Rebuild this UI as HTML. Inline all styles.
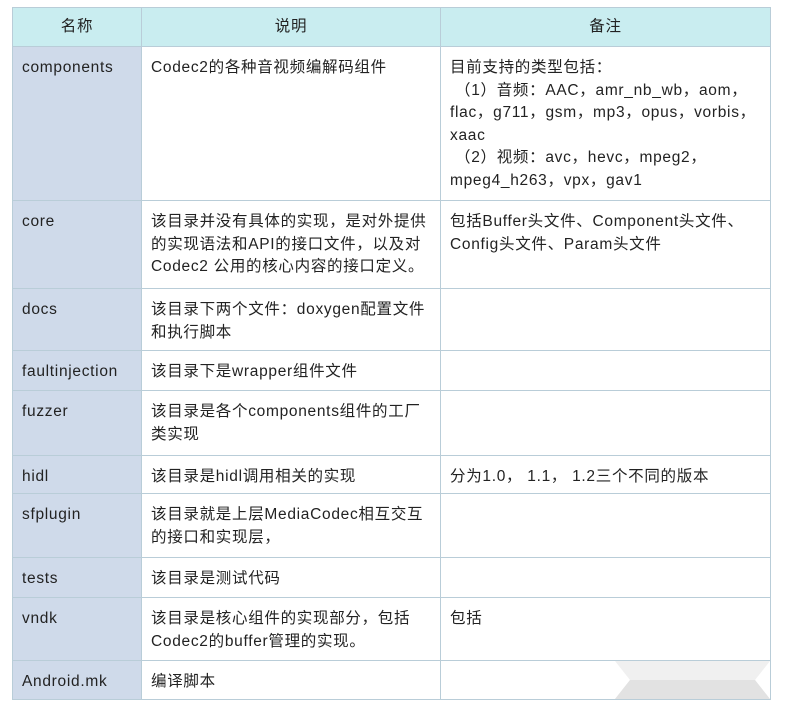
<!DOCTYPE html>
<html><head><meta charset="utf-8"><style>
body{margin:0;width:788px;height:713px;background:#fff;position:relative;overflow:hidden;font-family:"Liberation Sans","Noto Sans CJK SC",sans-serif;font-size:15.5px;color:#222;letter-spacing:0.7px;}
.c{position:absolute;box-sizing:border-box;border:1px solid #b9cdd8;padding:10px 0 0 9px;line-height:22.5px;white-space:nowrap;}
.h{background:#c9edf0;text-align:center;padding:8px 0 0 0;}
.n{background:#cfdaea;}
</style></head><body>
<div class="c h" style="left:12px;top:7px;width:130px;height:40px">名称</div>
<div class="c h" style="left:141px;top:7px;width:300px;height:40px">说明</div>
<div class="c h" style="left:440px;top:7px;width:331px;height:40px">备注</div>

<div class="c n" style="left:12px;top:46px;width:130px;height:155px">components</div>
<div class="c" style="left:141px;top:46px;width:300px;height:155px">Codec2的各种音视频编解码组件</div>
<div class="c" style="left:440px;top:46px;width:331px;height:155px">目前支持的类型包括：<br>&nbsp;（1）音频：AAC，amr_nb_wb，aom，<br>flac，g711，gsm，mp3，opus，vorbis，<br>xaac<br>&nbsp;（2）视频：avc，hevc，mpeg2，<br>mpeg4_h263，vpx，gav1</div>

<div class="c n" style="left:12px;top:200px;width:130px;height:89px">core</div>
<div class="c" style="left:141px;top:200px;width:300px;height:89px">该目录并没有具体的实现，是对外提供<br>的实现语法和API的接口文件，以及对<br>Codec2 公用的核心内容的接口定义。</div>
<div class="c" style="left:440px;top:200px;width:331px;height:89px">包括Buffer头文件、Component头文件、<br>Config头文件、Param头文件</div>

<div class="c n" style="left:12px;top:288px;width:130px;height:63px">docs</div>
<div class="c" style="left:141px;top:288px;width:300px;height:63px">该目录下两个文件：doxygen配置文件<br>和执行脚本</div>
<div class="c" style="left:440px;top:288px;width:331px;height:63px"></div>

<div class="c n" style="left:12px;top:350px;width:130px;height:41px">faultinjection</div>
<div class="c" style="left:141px;top:350px;width:300px;height:41px">该目录下是wrapper组件文件</div>
<div class="c" style="left:440px;top:350px;width:331px;height:41px"></div>

<div class="c n" style="left:12px;top:390px;width:130px;height:66px">fuzzer</div>
<div class="c" style="left:141px;top:390px;width:300px;height:66px">该目录是各个components组件的工厂<br>类实现</div>
<div class="c" style="left:440px;top:390px;width:331px;height:66px"></div>

<div class="c n" style="left:12px;top:455px;width:130px;height:39px">hidl</div>
<div class="c" style="left:141px;top:455px;width:300px;height:39px">该目录是hidl调用相关的实现</div>
<div class="c" style="left:440px;top:455px;width:331px;height:39px">分为1.0， 1.1， 1.2三个不同的版本</div>

<div class="c n" style="left:12px;top:493px;width:130px;height:65px">sfplugin</div>
<div class="c" style="left:141px;top:493px;width:300px;height:65px">该目录就是上层MediaCodec相互交互<br>的接口和实现层，</div>
<div class="c" style="left:440px;top:493px;width:331px;height:65px"></div>

<div class="c n" style="left:12px;top:557px;width:130px;height:41px">tests</div>
<div class="c" style="left:141px;top:557px;width:300px;height:41px">该目录是测试代码</div>
<div class="c" style="left:440px;top:557px;width:331px;height:41px"></div>

<div class="c n" style="left:12px;top:597px;width:130px;height:64px">vndk</div>
<div class="c" style="left:141px;top:597px;width:300px;height:64px">该目录是核心组件的实现部分，包括<br>Codec2的buffer管理的实现。</div>
<div class="c" style="left:440px;top:597px;width:331px;height:64px">包括</div>

<div class="c n" style="left:12px;top:660px;width:130px;height:40px">Android.mk</div>
<div class="c" style="left:141px;top:660px;width:300px;height:40px">编译脚本</div>
<div class="c" style="left:440px;top:660px;width:331px;height:40px"></div>

<svg style="position:absolute;left:610px;top:660px" width="170" height="40"><polygon points="5,1 160,1 145,20 160,39 5,39 20,20" fill="#f0f0f0"/><polygon points="20,20 145,20 160,39 5,39" fill="#e2e2e2"/></svg>
</body></html>
